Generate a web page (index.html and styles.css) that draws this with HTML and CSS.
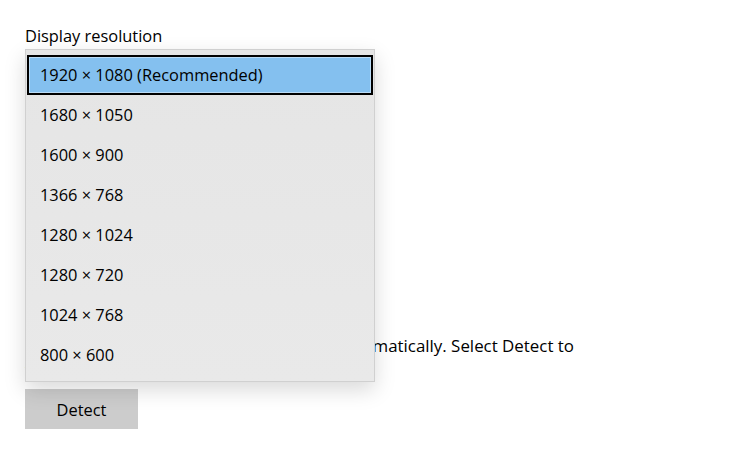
FILE: index.html
```html
<!DOCTYPE html>
<html lang="en">
<head>
<meta charset="utf-8">
<title>Display settings</title>
<link rel="stylesheet" href="styles.css">
</head>
<body>
<main class="page">
  <div class="setting">
    <div class="label">Display resolution</div>
    <div class="combo"></div>
    <div class="hidden-settings"></div>
    <p class="note"><span class="tight">Older displays might not always connect </span>automatically. Select Detect to<br>try to connect to them.</p>
    <button class="btn">Detect</button>

    <ul class="dropdown">
      <li class="item selected">1920 × 1080 (Recommended)</li>
      <li class="item">1680 × 1050</li>
      <li class="item">1600 × 900</li>
      <li class="item">1366 × 768</li>
      <li class="item">1280 × 1024</li>
      <li class="item">1280 × 720</li>
      <li class="item">1024 × 768</li>
      <li class="item">800 × 600</li>
    </ul>
  </div>
</main>
</body>
</html>
```
FILE: styles.css
```css
html, body {
  margin: 0;
  padding: 0;
  background: #ffffff;
}
body {
  font-family: "Open Sans", "Noto Sans", sans-serif;
  font-size: 16.4px;
  color: #000;
}
.page {
  padding: 24px 25px 0 25px;
}
.setting {
  position: relative;
  width: 700px;
}
.label {
  line-height: 24px;
  height: 24px;
}
.combo {
  margin-top: 4px;
  width: 300px;
  height: 32px;
  background: #ccc;
}
.hidden-settings {
  height: 250px;
}
.note {
  margin: 0;
  line-height: 24px;
  font-size: 16.9px;
  white-space: nowrap;
}
.note .tight {
  letter-spacing: -0.23px;
}
.btn {
  margin-top: 7px;
  width: 113px;
  height: 40px;
  border: 0;
  background: #cccccc;
  font: inherit;
  color: #000;
  padding: 0;
}
.dropdown {
  position: absolute;
  left: 0;
  top: 25px;
  width: 346px;
  margin: 0;
  padding: 5px 1px 6px 1px;
  list-style: none;
  background: linear-gradient(#e5e5e5, #e9e9e9);
  border: 1px solid #d0d0d0;
  box-shadow: 0 8px 20px rgba(0, 0, 0, 0.15);
}
.item {
  height: 40px;
  line-height: 40px;
  padding-left: 13px;
  box-sizing: border-box;
}
.item.selected {
  background: #84c0ef;
  border: 2px solid #000;
  box-shadow: inset 0 0 0 1px rgba(255, 255, 255, 0.45);
  padding-left: 11px;
  line-height: 36px;
}
```
